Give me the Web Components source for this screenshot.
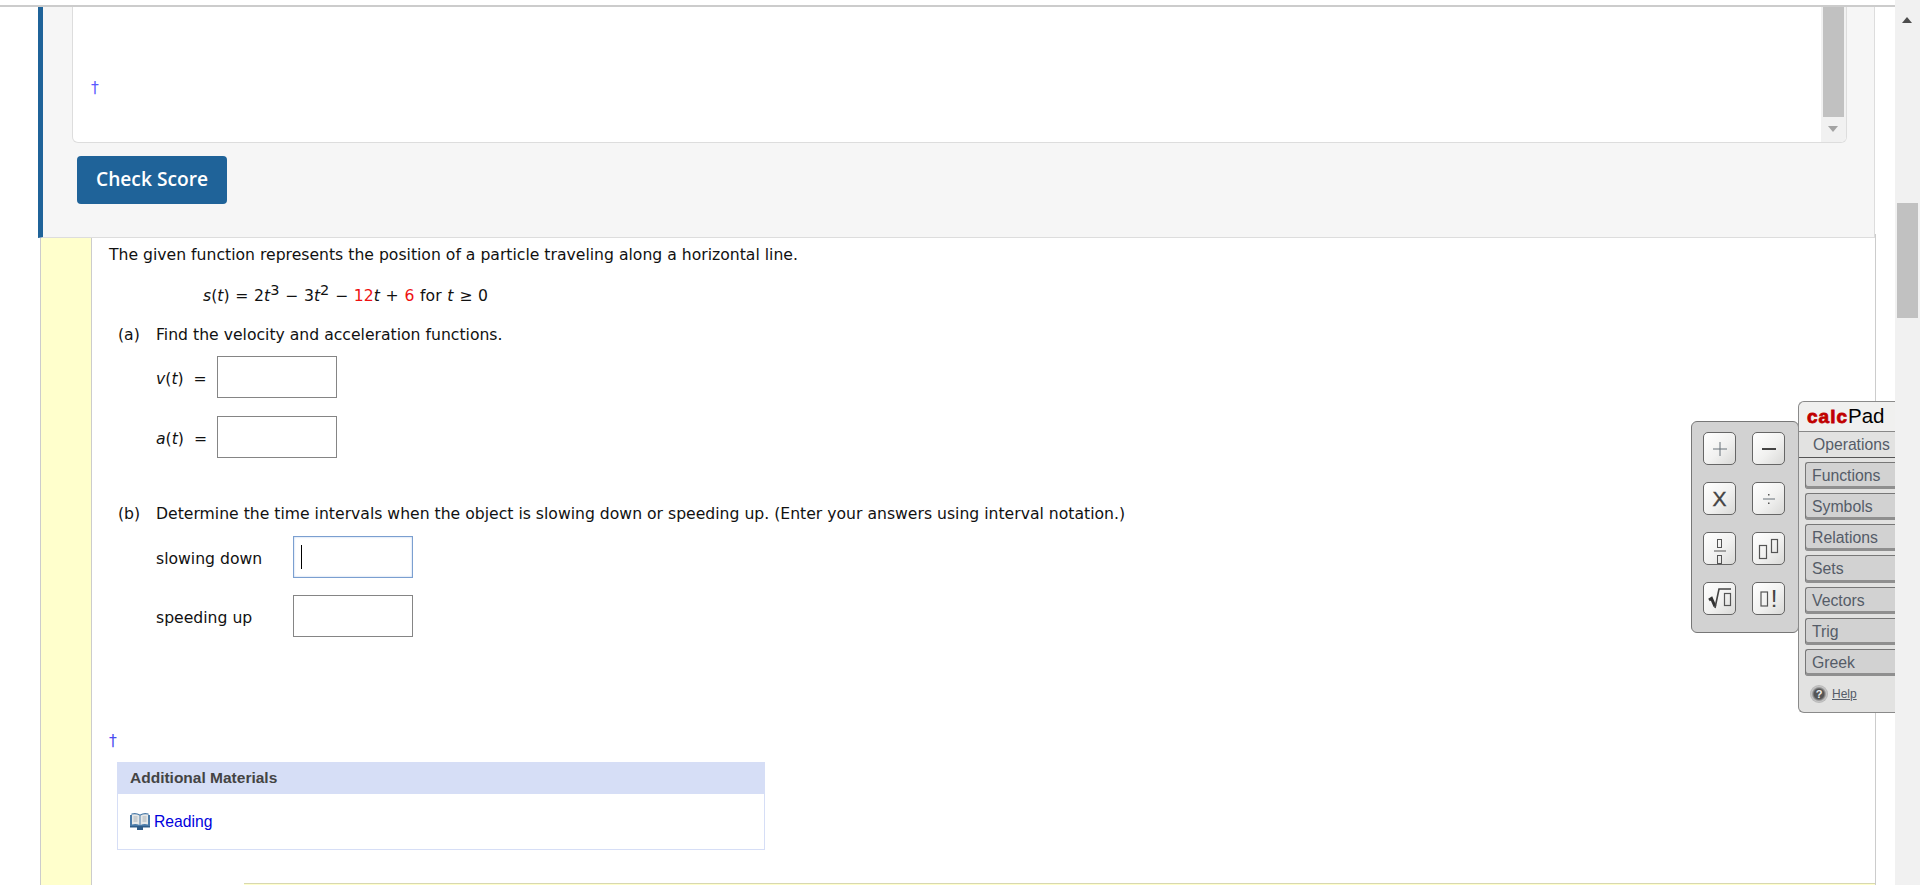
<!DOCTYPE html>
<html>
<head>
<meta charset="utf-8">
<title>Question</title>
<style>
  html, body { margin: 0; height: 885px; overflow: hidden; background: #fff; }
</style>
</head>
<body>
<wa-page>
  <score-panel>
    <inner-frame></inner-frame>
    <check-button>Check Score</check-button>
  </score-panel>
  <question-block>
    <p class="line">The given function represents the position of a particle traveling along a horizontal line.</p>
    <math-line></math-line>
    <part-a></part-a>
    <part-b></part-b>
    <dag-mark purple></dag-mark>
    <extra-materials></extra-materials>
  </question-block>
  <calc-pad slot="overlay"></calc-pad>
</wa-page>

<script>
const BODY_FONT = '"DejaVu Sans", Verdana, sans-serif';

class WaPage extends HTMLElement {
    constructor(){
        super();
        this.attachShadow({mode: "open"});
        this.shadowRoot.innerHTML = `
            <style>
                :host { display: flex; height: 885px; overflow: hidden; font-family: ${BODY_FONT}; }
                .main { position: relative; flex: 1; min-width: 0; height: 885px; overflow: hidden; }
                .rule { height: 2px; margin-top: 5px; background: #cccccc; }
                .over { position: absolute; left: 1691px; top: 401px; }
            </style>
            <div class="main">
                <div class="rule"></div>
                <slot></slot>
                <div class="over"><slot name="overlay"></slot></div>
            </div>
            <scroll-rail page></scroll-rail>
        `;
    }
}

class ScrollRail extends HTMLElement {
    constructor(){
        super();
        this.attachShadow({mode: "open"});
    }
    connectedCallback(){
        const page = this.hasAttribute("page");
        this.shadowRoot.innerHTML = page ? `
            <style>
                :host { display: block; width: 25px; height: 885px; background: #f1f1f1; flex: none; }
                .arrow { width: 0; height: 0; margin: 17px 0 0 7px; border: 5.5px solid transparent; border-top: 0; border-bottom: 6px solid #4d4d4d; }
                .thumb { width: 21px; height: 115px; margin: 180px 0 0 2px; background: #c1c1c1; }
            </style>
            <div class="arrow"></div>
            <div class="thumb"></div>
        ` : `
            <style>
                :host { display: flex; flex-direction: column; width: 25px; height: 100%; background: #f1f1f1; flex: none; }
                .thumb { width: 21px; height: 110px; margin-left: 2px; background: #c1c1c1; }
                .arrow { width: 0; height: 0; margin: 9px 0 0 7px; border: 5.5px solid transparent; border-bottom: 0; border-top: 6px solid #a3a3a3; }
            </style>
            <div class="thumb"></div>
            <div class="arrow"></div>
        `;
    }
}

class ScorePanel extends HTMLElement {
    constructor(){
        super();
        this.attachShadow({mode: "open"});
        this.shadowRoot.innerHTML = `
            <style>
                :host {
                    display: block; box-sizing: border-box; margin-left: 38px; width: 1837px; height: 231px;
                    background: #f6f6f6; border-left: 5px solid #1f6399;
                    border-right: 1px solid #dddddd; border-bottom: 1px solid #dddddd;
                    padding-left: 29px;
                }
            </style>
            <slot></slot>
        `;
    }
}

class InnerFrame extends HTMLElement {
    constructor(){
        super();
        this.attachShadow({mode: "open"});
        this.shadowRoot.innerHTML = `
            <style>
                :host {
                    display: flex; box-sizing: border-box; width: 1775px; height: 136px;
                    background: #fff; border: 1px solid #dddddd; border-top: 0;
                    border-radius: 0 0 6px 6px; overflow: hidden;
                }
                .content { flex: 1; padding: 73px 0 0 18px; }
            </style>
            <div class="content"><dag-mark></dag-mark></div>
            <scroll-rail></scroll-rail>
        `;
    }
}

class DagMark extends HTMLElement {
    constructor(){
        super();
        this.attachShadow({mode: "open"});
        this.shadowRoot.innerHTML = `
            <style>
                :host { display: block; width: 10px; height: 17px; font: 15.6px/17px "DejaVu Sans", sans-serif; color: #5a5aff; }
                :host([purple]) { color: #4a4cf0; }
            </style>
            †
        `;
    }
}

class CheckButton extends HTMLElement {
    constructor(){
        super();
        this.attachShadow({mode: "open"});
        this.shadowRoot.innerHTML = `
            <style>
                :host {
                    display: flex; align-items: center; justify-content: center; box-sizing: border-box;
                    width: 150px; height: 48px; margin: 13px 0 0 5px; padding-bottom: 3px;
                    background: #1f6399; color: #fff; border-radius: 4px;
                    font: 600 19.200px "Open Sans", sans-serif;
                }
            </style>
            <slot></slot>
        `;
    }
}

class QuestionBlock extends HTMLElement {
    constructor(){
        super();
        this.attachShadow({mode: "open"});
        this.shadowRoot.innerHTML = `
            <style>
                :host { display: flex; margin-left: 40px; width: 1836px; height: 647px; color: #111; font: 15.65px/20px ${BODY_FONT}; }
                .gutter { box-sizing: border-box; width: 52px; flex: none; background: #ffffcc; border-left: 1px solid #cccccc; border-right: 1px solid #cccccc; }
                .body { flex: 1; border-right: 1px solid #cccccc; padding-left: 17px; position: relative; }
                .body::after { content: ""; position: absolute; right: -1px; top: -4px; width: 1px; height: 4px; background: #cccccc; }
                ::slotted(p) { margin: 7px 0 0; font: inherit; }
                .tail { position: absolute; left: 152px; right: 0; bottom: 0; height: 1px; background: #ffffcc; border-top: 1px solid #d8d8b0; }
            </style>
            <div class="gutter"></div>
            <div class="body"><slot></slot><div class="tail"></div></div>
        `;
    }
}

class MathLine extends HTMLElement {
    constructor(){
        super();
        this.attachShadow({mode: "open"});
        this.shadowRoot.innerHTML = `
            <style>
                :host { display: block; margin: 21px 0 0 94px; word-spacing: 0.75px; }
                i { font-style: italic; }
                sup { font-size: 14.5px; line-height: 0; vertical-align: 6px; }
                .r { color: #ee1111; }
            </style>
            <i>s</i>(<i>t</i>) = 2<i>t</i><sup>3</sup> − 3<i>t</i><sup>2</sup> − <span class="r">12</span><i>t</i> + <span class="r">6</span> for <i>t</i> ≥ 0
        `;
    }
}

class AnswerBox extends HTMLElement {
    constructor(){
        super();
        this.attachShadow({mode: "open"});
    }
    connectedCallback(){
        const focus = this.hasAttribute("focused");
        this.shadowRoot.innerHTML = `
            <style>
                :host { display: block; position: relative; width: 120px; height: 42px; flex: none; }
                input { box-sizing: border-box; display: block; width: 100%; height: 100%; margin: 0; padding: 0 8px; background: #fff; outline: 0; border-radius: 0;
                    border: 1px solid ${focus ? "#7b9fd0" : "#858585"};
                    ${focus ? "box-shadow: inset 0 0 2px #a8c2e6;" : ""} }
                .caret { position: absolute; left: 8px; top: 9px; width: 1px; height: 24px; background: #000; }
            </style>
            <input type="text" aria-label="${this.getAttribute("label") || ""}">
            ${focus ? '<div class="caret"></div>' : ""}
        `;
    }
}

class PartA extends HTMLElement {
    constructor(){
        super();
        this.attachShadow({mode: "open"});
        this.shadowRoot.innerHTML = `
            <style>
                :host { display: block; }
                .head { display: flex; margin-top: 19px; }
                .tag { width: 47px; padding-left: 9px; box-sizing: border-box; }
                .row { display: flex; align-items: center; margin: 0 0 0 47px; height: 42px; }
                .row b { font-weight: normal; width: 61px; white-space: pre; padding-top: 4px; }
                i { font-style: italic; }
            </style>
            <div class="head"><div class="tag">(a)</div><div>Find the velocity and acceleration functions.</div></div>
            <div class="row" style="margin-top:11px"><b><i>v</i>(<i>t</i>)  =</b><answer-box label="v(t)"></answer-box></div>
            <div class="row" style="margin-top:18px"><b><i>a</i>(<i>t</i>)  =</b><answer-box label="a(t)"></answer-box></div>
        `;
    }
}

class PartB extends HTMLElement {
    constructor(){
        super();
        this.attachShadow({mode: "open"});
        this.shadowRoot.innerHTML = `
            <style>
                :host { display: block; }
                .head { display: flex; margin-top: 46px; }
                .tag { width: 47px; padding-left: 9px; box-sizing: border-box; }
                .row { display: flex; align-items: center; margin: 0 0 0 47px; height: 42px; }
                .row b { font-weight: normal; width: 137px; padding-top: 4px; }
            </style>
            <div class="head"><div class="tag">(b)</div><div>Determine the time intervals when the object is slowing down or speeding up. (Enter your answers using interval notation.)</div></div>
            <div class="row" style="margin-top:12px"><b>slowing down</b><answer-box focused label="slowing down"></answer-box></div>
            <div class="row" style="margin-top:17px"><b>speeding up</b><answer-box label="speeding up"></answer-box></div>
            <div style="height:96px"></div>
        `;
    }
}

class ExtraMaterials extends HTMLElement {
    constructor(){
        super();
        this.attachShadow({mode: "open"});
        this.shadowRoot.innerHTML = `
            <style>
                :host { display: block; box-sizing: border-box; width: 648px; height: 88px; margin: 12px 0 0 8px; border: 1px solid #d6def6; border-top: 0; font-family: "Liberation Sans", Arial, sans-serif; }
                .head { height: 32px; line-height: 32px; padding-left: 12px; background: #d6def6; color: #444; font-size: 15.5px; font-weight: bold; }
                .link { display: flex; align-items: center; gap: 4px; margin: 18px 0 0 12px; color: #0000dd; font-size: 15.7px; line-height: 20px; }
            </style>
            <div class="head">Additional Materials</div>
            <div class="link">
                <svg width="20" height="19" viewBox="0 0 20 19" style="margin-top:-2px">
                    <path d="M0 3h1.500V1.500Q6 0 10 2.500 14 0 18.500 1.500V3H20v12h-7v2H7v-2H0z" fill="#4a7aa8"/>
                    <path d="M2 2.500Q6 1.500 9.500 3.500V13Q6 11.500 2 12.500zM10.500 3.500Q14 1.500 18 2.500v10q-4-1-7.500.5z" fill="#e6e8e8"/>
                    <path d="M3.500 5h4M3.500 7h4M3.500 9h4M12.500 5h4M12.500 7h4M12.500 9h4" stroke="#a9b2b8" stroke-width="1"/>
                    <path d="M0 14h20v1.500h-7V18H7v-2.500H0z" fill="#2f5c88"/>
                </svg>
                <span>Reading</span>
            </div>
        `;
    }
}

class PadKey extends HTMLElement {
    constructor(){
        super();
        this.attachShadow({mode: "open"});
        this.shadowRoot.innerHTML = `
            <style>
                :host {
                    display: flex; align-items: center; justify-content: center; box-sizing: border-box;
                    width: 33px; height: 33px; border: 1px solid #666; border-radius: 5px;
                    background: linear-gradient(135deg, #ffffff 0%, #f1f1f0 55%, #d9d9d7 100%);
                    color: #444; font-family: "Liberation Sans", Arial, sans-serif;
                }
                ::slotted(svg) { display: block; }
            </style>
            <slot></slot>
        `;
    }
}

class PadTab extends HTMLElement {
    constructor(){
        super();
        this.attachShadow({mode: "open"});
        this.shadowRoot.innerHTML = `
            <style>
                :host {
                    display: block; box-sizing: border-box; height: 27px; padding-left: 6px; line-height: 25px;
                    background: #d2d2d2; border: 1px solid #777; border-right: 0; border-bottom: 0;
                    border-radius: 3px 0 0 3px; color: #555c68; font-size: 15.8px;
                    box-shadow: inset 0 -3px 0 #8f8f8f; white-space: nowrap;
                }
            </style>
            <slot></slot>
        `;
    }
}

class CalcPad extends HTMLElement {
    constructor(){
        super();
        this.attachShadow({mode: "open"});
        const box = 'fill="none" stroke="#555"';
        this.shadowRoot.innerHTML = `
            <style>
                :host { display: flex; align-items: flex-start; font-family: "Liberation Sans", Arial, sans-serif; }
                .keys {
                    box-sizing: border-box; width: 108px; height: 212px; margin-top: 20px;
                    display: grid; grid-template-columns: 33px 33px; grid-auto-rows: 33px; gap: 17px 16px; padding: 10px 0 0 11px;
                    background: #d2d2d2; border: 1px solid #777; border-radius: 6px; margin-right: -1px;
                }
                .side {
                    box-sizing: border-box; width: 120px; height: 312px;
                    background: #e2e2e1; border: 1px solid #8a8a8a; border-right: 0; border-radius: 6px 0 0 6px;
                }
                .brand { height: 30px; line-height: 28px; padding-left: 8px; background: #f0f0ef; border-bottom: 1px solid #888; border-radius: 6px 0 0 0; font-size: 20.500px; color: #000; white-space: nowrap; box-sizing: border-box; }
                .brand b { color: #c00000; font-size: 19px; font-weight: bold; letter-spacing: 1px; -webkit-text-stroke: 0.8px #c00000; }
                .active { height: 26px; line-height: 25px; padding-left: 14px; border-bottom: 1px solid #555; box-sizing: border-box; color: #555c68; font-size: 15.7px; }
                .tabs { display: grid; gap: 4px; padding: 4px 0 0 6px; }
                .tabs pad-tab:nth-child(4) { height: 28px; }
                .help { display: flex; align-items: center; gap: 4px; margin: 9px 0 0 11px; font-size: 12px; color: #555c68; }
                .help span { display: block; text-decoration: underline; }
                .q { width: 18px; height: 18px; border-radius: 50%; display: flex; align-items: center; justify-content: center; flex: none;
                    background: radial-gradient(circle at 50% 50%, #555 0 38%, #c4c4c4 58%, #8f8f8f 100%); color: #eee; font-size: 11px; font-weight: bold; }
                .glyph { font-size: 21px; line-height: 1; -webkit-text-stroke: 0.4px #444; }
                .bang { font-size: 24px; color: #444; }
            </style>
            <div class="keys">
                <pad-key><svg width="16" height="16" viewBox="0 0 16 16"><path d="M8 1v14M1 8h14" stroke="#667078" stroke-width="1"/></svg></pad-key>
                <pad-key><svg width="16" height="6" viewBox="0 0 16 6"><path d="M1 3h14" stroke="#444" stroke-width="2"/></svg></pad-key>
                <pad-key><span class="glyph">X</span></pad-key>
                <pad-key><svg width="14" height="12" viewBox="0 0 14 12"><path d="M1 6h12" stroke="#667078"/><rect x="6" y="1" width="1.500" height="1.500" fill="#555"/><rect x="6" y="9.500" width="1.500" height="1.500" fill="#555"/></svg></pad-key>
                <pad-key><svg width="14" height="30" viewBox="0 0 14 30"><rect x="4.500" y="5.500" width="4" height="8" ${box}/><path d="M1 17h12" stroke="#555"/><rect x="4.500" y="21.500" width="4" height="8" ${box}/></svg></pad-key>
                <pad-key><svg width="22" height="22" viewBox="0 0 22 22"><rect x="1.500" y="7.500" width="7" height="13" ${box} stroke-width="1.200"/><rect x="13.500" y="1.500" width="6" height="13" ${box} stroke-width="1.200"/></svg></pad-key>
                <pad-key><svg width="24" height="23" viewBox="0 0 24 23"><path d="M1 13l2.500-1.500 3.500 8" fill="none" stroke="#333" stroke-width="3"/><path d="M7 21L11 2h12" fill="none" stroke="#444" stroke-width="1.600"/><rect x="16.500" y="6.500" width="6" height="12" ${box} stroke-width="1.200"/></svg></pad-key>
                <pad-key><svg width="9" height="16" viewBox="0 0 9 16" style="margin-right:2px"><rect x="1" y="1" width="6.500" height="14" ${box} stroke-width="1.200"/></svg><span class="bang">!</span></pad-key>
            </div>
            <div class="side">
                <div class="brand"><b>calc</b>Pad</div>
                <div class="active">Operations</div>
                <div class="tabs">
                    <pad-tab>Functions</pad-tab>
                    <pad-tab>Symbols</pad-tab>
                    <pad-tab>Relations</pad-tab>
                    <pad-tab>Sets</pad-tab>
                    <pad-tab>Vectors</pad-tab>
                    <pad-tab>Trig</pad-tab>
                    <pad-tab>Greek</pad-tab>
                </div>
                <div class="help"><div class="q">?</div><span>Help</span></div>
            </div>
        `;
    }
}

customElements.define('scroll-rail', ScrollRail);
customElements.define('dag-mark', DagMark);
customElements.define('inner-frame', InnerFrame);
customElements.define('check-button', CheckButton);
customElements.define('score-panel', ScorePanel);
customElements.define('math-line', MathLine);
customElements.define('answer-box', AnswerBox);
customElements.define('part-a', PartA);
customElements.define('part-b', PartB);
customElements.define('extra-materials', ExtraMaterials);
customElements.define('question-block', QuestionBlock);
customElements.define('pad-key', PadKey);
customElements.define('pad-tab', PadTab);
customElements.define('calc-pad', CalcPad);
customElements.define('wa-page', WaPage);
</script>
</body>
</html>
